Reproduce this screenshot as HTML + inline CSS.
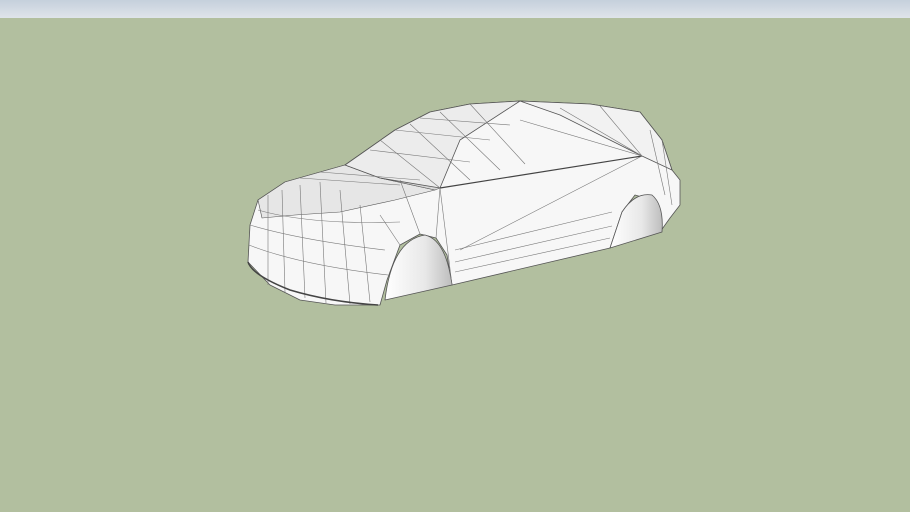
<!DOCTYPE html>
<html><head><style>
html,body{margin:0;padding:0;width:910px;height:512px;overflow:hidden;background:#b2bf9f}
#sky{position:absolute;left:0;top:0;width:910px;height:18px;background:linear-gradient(#c5d0dc,#dfe4ea)}
svg{position:absolute;left:0;top:0}
</style></head><body>
<div id="sky"></div>
<svg width="910" height="512" viewBox="0 0 910 512">
<defs>
<linearGradient id="w" x1="0" x2="1"><stop offset="0" stop-color="#fff"/><stop offset="0.6" stop-color="#e8e8e8"/><stop offset="1" stop-color="#bdbdbd"/></linearGradient>
</defs>
<g stroke="#555" stroke-width="0.8" stroke-linejoin="round">
<polygon fill="#f7f7f7" points="248,262 250,225 258,200 285,182 345,165 395,130 430,112 470,104 520,101 590,104 640,112 662,140 672,170 680,180 680,205 670,218 660,232 652,200 635,195 622,212 610,248 452,285 447,255 436,238 420,234 400,245 387,280 380,305 335,305 300,300 270,285"/>
<polygon fill="#e6e6e6" stroke-width="0.6" points="258,200 285,182 345,165 380,178 435,190 395,200 340,212 295,215 262,218"/>
<polygon fill="#d8d8d8" stroke-width="0.6" points="345,165 380,178 435,190 440,188 415,182 380,172"/>
<polygon fill="#ececec" points="345,165 395,130 430,112 470,104 520,101 460,140 440,188 380,178"/>
<polygon fill="#f2f2f2" points="520,101 590,104 640,112 662,140 672,170 642,156 560,115"/>
<polyline fill="none" stroke="#444" stroke-width="1.2" points="440,188 642,156"/>
<path d="M385,300 Q392,240 425,235 Q446,240 452,285 Z" fill="url(#w)"/>
<path d="M622,212 Q635,192 652,195 Q664,205 662,232 L610,248 Z" fill="url(#w)"/>
<g fill="none" stroke="#777" stroke-width="0.6">
<path d="M250,225 Q300,240 385,250"/><path d="M249,245 Q300,265 388,275"/><path d="M258,210 Q310,225 400,222"/>
<path d="M268,195 L268,285"/><path d="M282,190 L285,292"/><path d="M300,185 L305,298"/><path d="M320,182 L326,303"/><path d="M340,190 L350,304"/>
<path d="M360,205 L370,302"/><path d="M380,215 L400,245"/>
<path d="M300,178 L400,185"/><path d="M320,172 L420,180"/>
<path d="M370,150 L470,162"/><path d="M395,130 L490,140"/><path d="M420,118 L510,125"/>
<path d="M380,140 L440,188"/><path d="M410,124 L470,180"/><path d="M440,112 L500,170"/><path d="M470,104 L525,164"/>
<path d="M440,188 L436,238"/><path d="M440,188 L452,285"/><path d="M400,180 L420,234"/>
<path d="M642,156 L460,250"/><path d="M642,156 L520,120"/><path d="M642,156 L560,108"/><path d="M642,156 L600,106"/>
<path d="M455,250 L612,212"/><path d="M455,262 L612,226"/><path d="M455,272 L610,238"/>
<path d="M662,140 L672,205"/><path d="M650,130 L665,195"/>
</g>
<path d="M248,262 Q252,275 290,290 Q330,302 378,305" fill="none" stroke="#444" stroke-width="1.5"/>
</g>
</svg>
</body></html>
